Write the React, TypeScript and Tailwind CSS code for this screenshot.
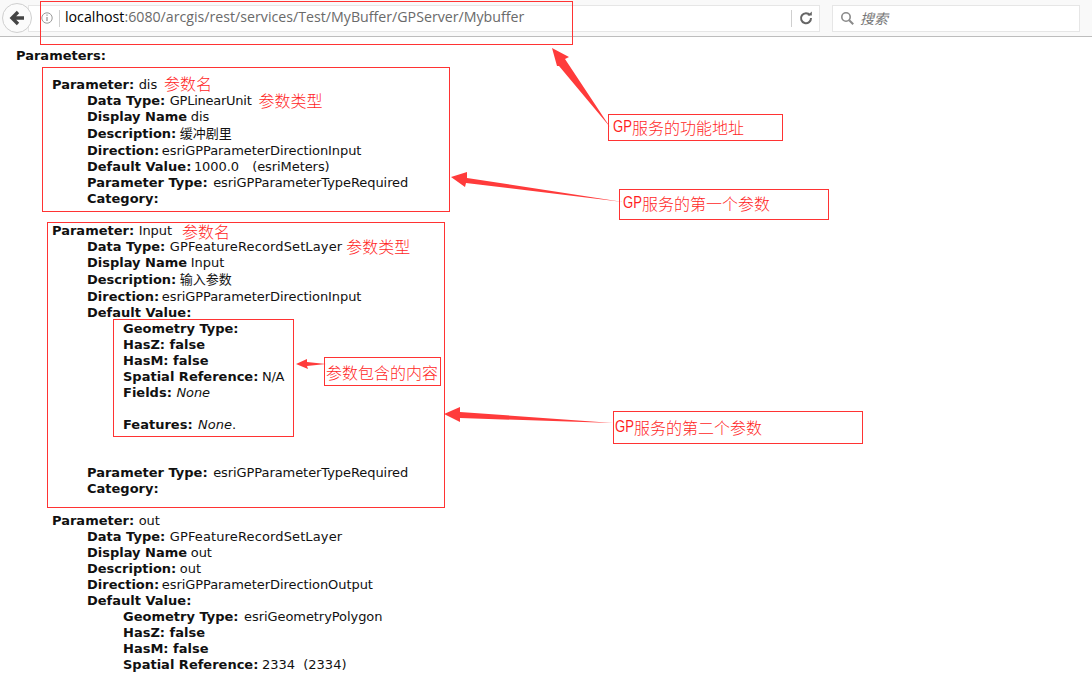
import React from "react";

const cjk = "font-['DejaVu_Sans','Noto_Sans_CJK_SC',sans-serif]";

function Row({
  label,
  children,
  adj = "",
  rowCls = "h-4 leading-4",
}: {
  label: string;
  children?: React.ReactNode;
  adj?: string;
  rowCls?: string;
}) {
  return (
    <div className={`whitespace-pre ${rowCls}`}>
      <b>{label}</b>
      <span className={adj || "tracking-[-0.07px]"}>{children}</span>
    </div>
  );
}

function Note({ cls, children }: { cls: string; children: React.ReactNode }) {
  return (
    <span
      className={`inline-block h-4 align-top font-['Noto_Sans_CJK_SC',sans-serif] text-[16px] font-light leading-4 tracking-normal text-[#ff1f1f] ${cls}`}
    >
      {children}
    </span>
  );
}

function Box({ cls, children }: { cls: string; children?: React.ReactNode }) {
  return (
    <div
      className={`absolute flex items-center border border-[#ff3333] font-['Noto_Sans_CJK_SC',sans-serif] text-[16px] font-light leading-none text-[#ff1f1f] ${cls}`}
    >
      {children}
    </div>
  );
}

function GP() {
  return (
    <span className="inline-block w-[19px] origin-left scale-x-[0.82] whitespace-nowrap font-['Liberation_Sans',sans-serif] text-[16px]">
      GP
    </span>
  );
}

export default function App() {
  return (
    <div className={`relative h-[689px] w-[1092px] overflow-hidden bg-white text-[13px] text-[#111] ${cjk}`}>
      <header className="flex h-[37px] items-center border-b border-[#bdbdbd] bg-[#f9f9f9] pl-[2px]">
        <div className="z-10 flex h-[30px] w-[30px] items-center justify-center rounded-full border border-[#cfcfcf] bg-[#fbfbfb]">
          <svg width="18" height="18" viewBox="0 0 18 18">
            <path d="M10 3 4 9l6 6M4.5 9H16" fill="none" stroke="#444" strokeWidth="3.4" />
          </svg>
        </div>
        <div className="-ml-[4px] flex h-[27px] w-[792px] items-center border border-[#e6e6e6] bg-white pl-[12px]">
          <svg width="12" height="12" viewBox="0 0 12 12" className="shrink-0">
            <circle cx="6" cy="6" r="5.2" fill="none" stroke="#9a9a9a" />
            <path d="M6 5v4M6 2.6v1.2" stroke="#9a9a9a" strokeWidth="1.3" />
          </svg>
          <div className="ml-[6px] h-[17px] w-px bg-[#cfcfcf]" />
          <div className="ml-[5px] -mt-[2px] w-[726px] whitespace-pre font-['Open_Sans',sans-serif] text-[14.2px] text-[#6a6a6a]">
            <span className="text-black">localhost</span>:6080/arcgis/rest/services/Test/MyBuffer/GPServer/Mybuffer
          </div>
          <div className="h-[17px] w-px bg-[#cfcfcf]" />
          <svg width="14" height="14" viewBox="0 0 14 14" className="ml-[7px]">
            <path d="M11 4.2A5 5 0 1 0 12 7" fill="none" stroke="#666" strokeWidth="2" />
            <path d="M8.5 4.5h4.3V.5z" fill="#666" />
          </svg>
        </div>
        <div className="ml-[12px] flex h-[27px] w-[248px] items-center border border-[#e6e6e6] bg-white pl-[7px]">
          <svg width="15" height="15" viewBox="0 0 15 15">
            <circle cx="6" cy="6" r="4.2" fill="none" stroke="#8a8a8a" strokeWidth="1.6" />
            <path d="m9.2 9.2 4 4" stroke="#8a8a8a" strokeWidth="2" />
          </svg>
          <span className="ml-[5px] font-['Noto_Sans_CJK_SC',sans-serif] text-[14px] italic text-[#777]">搜索</span>
        </div>
      </header>

      <main className="pl-[16px] pt-[11px]">
        <div className="h-4 font-bold leading-4">Parameters:</div>
        <div className="pl-[36px] pt-[13px]">
          <section className="pb-4">
            <Row label="Parameter: ">
              dis
              <Note cls="ml-[7px] -translate-y-[2px]">参数名</Note>
            </Row>
            <div className="pl-[35px]">
              <Row label="Data Type: " adj="tracking-[-0.25px]">
                GPLinearUnit
                <Note cls="ml-[7px] -translate-y-[1px]">参数类型</Note>
              </Row>
              <Row label="Display Name " adj="-ml-[1px]">dis</Row>
              <Row label="Description: " adj="-ml-[1px]" rowCls="h-[18px] leading-[18px]">缓冲剧里</Row>
              <Row label="Direction: " adj="-ml-[2px] tracking-[-0.07px]">esriGPParameterDirectionInput</Row>
              <Row label="Default Value: " adj="-ml-[2px] tracking-[-0.07px]">
                1000.0<span className="ml-[1px]">   (esriMeters)</span>
              </Row>
              <Row label="Parameter Type: " adj="ml-[1px] tracking-[-0.07px]">esriGPParameterTypeRequired</Row>
              <Row label="Category: " />
            </div>
          </section>
          <section className="pb-4">
            <Row label="Parameter: ">
              Input
              <Note cls="ml-[10px]">参数名</Note>
            </Row>
            <div className="pl-[35px]">
              <Row label="Data Type: " adj="tracking-[0.13px]">
                GPFeatureRecordSetLayer
                <Note cls="ml-[4px] -translate-y-[1px]">参数类型</Note>
              </Row>
              <Row label="Display Name " adj="-ml-[1px]">Input</Row>
              <Row label="Description: " adj="-ml-[1px]" rowCls="h-[18px] leading-[18px]">输入参数</Row>
              <Row label="Direction: " adj="-ml-[2px] tracking-[-0.07px]">esriGPParameterDirectionInput</Row>
              <Row label="Default Value: " />
              <div className="pl-[36px]">
                <Row label="Geometry Type: " />
                <Row label="HasZ: false" />
                <Row label="HasM: false" />
                <Row label="Spatial Reference: " adj="-ml-[1px] tracking-[-0.2px]">N/A</Row>
                <Row label="Fields: "><i>None</i></Row>
                <div className="h-4" />
                <Row label="Features: " adj="ml-[1px]"><i>None</i>.</Row>
              </div>
              <div className="h-8" />
              <Row label="Parameter Type: " adj="ml-[1px] tracking-[-0.07px]">esriGPParameterTypeRequired</Row>
              <Row label="Category: " />
            </div>
          </section>
          <section>
            <Row label="Parameter: ">out</Row>
            <div className="pl-[35px]">
              <Row label="Data Type: " adj="tracking-[0.13px]">GPFeatureRecordSetLayer</Row>
              <Row label="Display Name " adj="-ml-[1px]">out</Row>
              <Row label="Description: " adj="-ml-[1px]">out</Row>
              <Row label="Direction: " adj="-ml-[2px] tracking-[-0.07px]">esriGPParameterDirectionOutput</Row>
              <Row label="Default Value: " />
              <div className="pl-[36px]">
                <Row label="Geometry Type: " adj="ml-[1px] tracking-[-0.07px]">esriGeometryPolygon</Row>
                <Row label="HasZ: false" />
                <Row label="HasM: false" />
                <Row label="Spatial Reference: " adj="-ml-[1px]">2334  (2334)</Row>
              </div>
            </div>
          </section>
        </div>
      </main>

      <Box cls="left-[40px] top-[1px] h-[44px] w-[533px]" />
      <Box cls="left-[42px] top-[67px] h-[145px] w-[408px]" />
      <Box cls="left-[47px] top-[222px] h-[286px] w-[398px]" />
      <Box cls="left-[113px] top-[319px] h-[118px] w-[181px]" />
      <Box cls="left-[608px] top-[114px] h-[27px] w-[175px] pb-[2px] pl-[4px]"><GP />服务的功能地址</Box>
      <Box cls="left-[619px] top-[189px] h-[31px] w-[210px] pb-[4px] pl-[3px]"><GP />服务的第一个参数</Box>
      <Box cls="left-[324px] top-[357px] h-[29px] w-[117px] pl-[1px]">参数包含的内容</Box>
      <Box cls="left-[613px] top-[411px] h-[33px] w-[250px] pb-[2px] pl-[1px]"><GP />服务的第二个参数</Box>

      <svg className="absolute left-0 top-0" width="1092" height="689" fill="#ff3b3b">
        <path d="M552 48 569 57 565 59 610 127 559 66 557 66Z" />
        <path d="M451 177 467 172 467 178 623 202 466 183 465 187Z" />
        <path d="M296 364 307 359 307 362 326 364 307 366 308 369Z" />
        <path d="M444 414 460 407 460 412 613 423 460 418 460 422Z" />
      </svg>
    </div>
  );
}
